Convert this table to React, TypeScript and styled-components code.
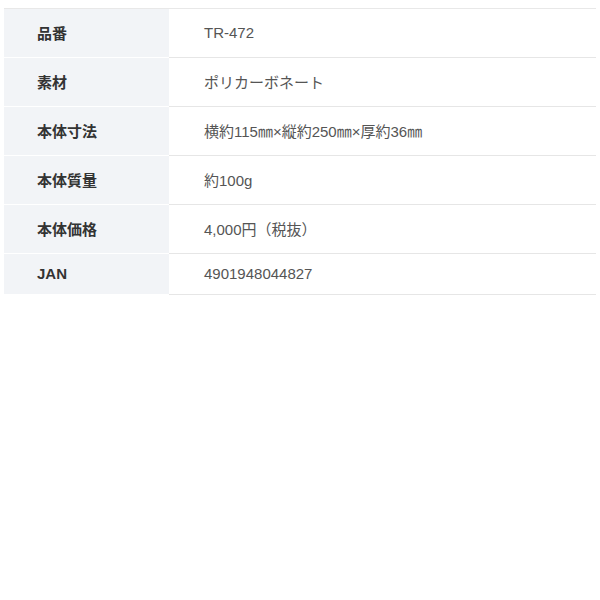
import React from 'react';
import styled, { createGlobalStyle } from 'styled-components';

const GlobalStyle = createGlobalStyle`
  html, body {
    margin: 0;
    padding: 0;
    background: #fff;
  }
  body {
    font-family: 'Liberation Sans', 'Noto Sans CJK JP', sans-serif;
  }
`;

const Page = styled.div`
  padding: 8px 4px 0 4px;
`;

const SpecTable = styled.div`
  display: grid;
  grid-template-columns: 165px 1fr;
  border-top: 1px solid #e8e8e8;
`;

const Head = styled.div<{ $compact?: boolean }>`
  display: flex;
  align-items: center;
  height: ${(p) => (p.$compact ? 41 : 49)}px;
  padding-left: 33px;
  padding-bottom: 1px;
  box-sizing: border-box;
  background: #f2f4f7;
  border-bottom: 1px solid #fff;
  font-size: 15px;
  font-weight: bold;
  color: #333;
`;

const Value = styled.div<{ $compact?: boolean }>`
  display: flex;
  align-items: center;
  height: ${(p) => (p.$compact ? 41 : 49)}px;
  padding-left: 35px;
  padding-bottom: 1px;
  box-sizing: border-box;
  border-bottom: 1px solid #e6e6e6;
  font-size: 15px;
  color: #555;
`;

const specs = [
  { label: '品番', value: 'TR-472' },
  { label: '素材', value: 'ポリカーボネート' },
  { label: '本体寸法', value: '横約115㎜×縦約250㎜×厚約36㎜' },
  { label: '本体質量', value: '約100g' },
  { label: '本体価格', value: '4,000円（税抜）' },
  { label: 'JAN', value: '4901948044827', compact: true },
];

export default function App() {
  return (
    <>
      <GlobalStyle />
      <Page>
        <SpecTable>
          {specs.map((s) => (
            <React.Fragment key={s.label}>
              <Head $compact={s.compact}>{s.label}</Head>
              <Value $compact={s.compact}>{s.value}</Value>
            </React.Fragment>
          ))}
        </SpecTable>
      </Page>
    </>
  );
}
